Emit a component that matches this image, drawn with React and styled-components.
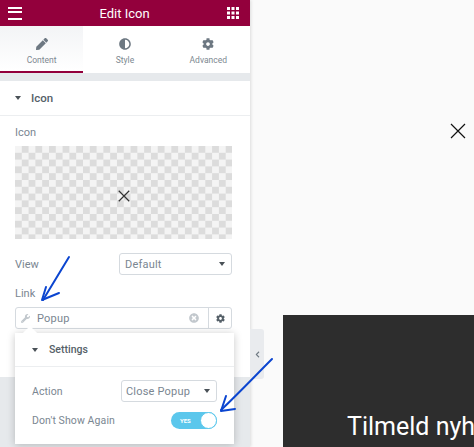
import styled, { createGlobalStyle } from 'styled-components';
import { FaPen, FaCog, FaAdjust, FaWrench, FaTimesCircle, FaChevronLeft } from 'react-icons/fa';

const GlobalStyle = createGlobalStyle`
  html, body {
    margin: 0;
    padding: 0;
    height: 100%;
    overflow: hidden;
    background: #fafafa;
    font-family: Roboto, "Liberation Sans", sans-serif;
  }
  #root { height: 100%; }
`;

const Page = styled.div`
  position: relative;
  display: flex;
  width: 474px;
  height: 447px;
  overflow: hidden;
`;

const Sidebar = styled.aside`
  position: relative;
  flex: 0 0 250px;
  display: flex;
  flex-direction: column;
  background: #e6e9ec;
  box-shadow: 1px 0 3px rgba(0, 0, 0, 0.12);
`;

const Header = styled.header`
  height: 26px;
  display: flex;
  align-items: center;
  justify-content: space-between;
  padding: 0 11px 0 8px;
  background: #93003c;
  color: #fff;
`;

const HeaderTitle = styled.h1`
  margin: 0;
  font-size: 13px;
  font-weight: 400;
`;

const Burger = styled.div`
  width: 14px;
  height: 9px;
  border-top: 2px solid #fff;
  border-bottom: 2px solid #fff;
  position: relative;
  &::after {
    content: '';
    position: absolute;
    left: 0;
    right: 0;
    top: 2.5px;
    height: 2px;
    background: #fff;
  }
`;

const Tabs = styled.nav`
  display: flex;
  height: 47px;
  background: #fff;
`;

const Tab = styled.div`
  flex: 1;
  display: flex;
  flex-direction: column;
  align-items: center;
  padding-top: 12px;
  gap: 5px;
  box-sizing: border-box;
  color: #7d8891;
  background: ${(p) => (p.$active ? 'linear-gradient(#f3f4f6, #fff)' : '#fff')};
  border-bottom: ${(p) => (p.$active ? '2px solid #93003c' : '0')};
  font-size: 8.5px;
  svg { font-size: 12px; color: #6d7882; }
`;

const Body = styled.div`
  margin-top: 8px;
  background: #fff;
  height: 296px;
`;

const SectionHead = styled.div`
  height: 34px;
  display: flex;
  align-items: center;
  gap: 10px;
  padding-left: 15px;
  border-bottom: 1px solid #eceef0;
  font-size: 11.5px;
  font-weight: 500;
  color: #556068;
`;

const Caret = styled.span`
  width: 0;
  height: 0;
  border-left: 3.5px solid transparent;
  border-right: 3.5px solid transparent;
  border-top: 4px solid #495157;
`;

const Controls = styled.div`
  padding: 10px 18px 0 15px;
  display: flex;
  flex-direction: column;
`;

const Label = styled.label`
  font-size: 11px;
  color: #7a8691;
  line-height: 13px;
`;

const Checker = styled.div`
  margin-top: 7px;
  height: 93px;
  display: flex;
  align-items: center;
  justify-content: center;
  background-color: #f4f4f4;
  background-image: conic-gradient(#dcdcdc 25%, transparent 0 50%, #dcdcdc 0 75%, transparent 0);
  background-size: 13.6px 13.6px;
`;

const PreviewGlyph = styled.span`
  height: 12px;
  color: #333;
`;

const Row = styled.div`
  display: flex;
  align-items: center;
  justify-content: space-between;
  margin-top: ${(p) => p.$top || '0'};
`;

const Select = styled.div`
  width: ${(p) => p.$width};
  height: 22px;
  box-sizing: border-box;
  display: flex;
  align-items: center;
  justify-content: space-between;
  padding: 0 6px 0 ${(p) => p.$pad || '5px'};
  border: 1px solid #d5dadf;
  border-radius: 3px;
  background: #fff;
  font-size: 11px;
  color: #7a8691;
  letter-spacing: 0.2px;
`;

const LinkLabel = styled(Label)`
  margin-top: 12px;
`;

const LinkField = styled.div`
  margin-top: 7px;
  height: 22px;
  box-sizing: border-box;
  display: flex;
  align-items: center;
  border: 1px solid #d5dadf;
  border-radius: 3px;
  font-size: 11px;
  color: #7a8691;
`;

const LinkText = styled.div`
  flex: 1;
  display: flex;
  align-items: center;
  gap: 7px;
  padding: 0 9px 0 5px;
  svg:first-child { color: #c2c8cd; font-size: 9px; }
  svg:last-child { color: #c2c8cd; font-size: 10px; margin-left: auto; }
  span { letter-spacing: 0.2px; }
`;

const LinkGear = styled.div`
  width: 22px;
  height: 100%;
  display: flex;
  align-items: center;
  justify-content: center;
  border-left: 1px solid #d5dadf;
  color: #556068;
  font-size: 9px;
`;

const Popover = styled.div`
  position: absolute;
  left: 15px;
  top: 333px;
  width: 219px;
  height: 111px;
  background: #fff;
  box-shadow: 0 1px 8px rgba(0, 0, 0, 0.22);
  &::before {
    content: '';
    position: absolute;
    left: 10px;
    top: -5px;
    width: 10px;
    height: 10px;
    background: #fff;
    transform: rotate(45deg);
  }
`;

const PopoverHead = styled.div`
  position: relative;
  height: 33px;
  display: flex;
  align-items: center;
  gap: 11px;
  padding-left: 17px;
  border-bottom: 1px solid #eceef0;
  font-size: 10.5px;
  font-weight: 500;
  color: #556068;
`;

const PopoverBody = styled.div`
  padding: 13px 17px 0 17px;
  display: flex;
  flex-direction: column;
`;

const PopLabel = styled.span`
  font-size: 10.5px;
  color: #7a8691;
  letter-spacing: 0.1px;
`;

const Toggle = styled.div`
  width: 46px;
  height: 17px;
  border-radius: 9px;
  background: #5bc7ec;
  position: relative;
  display: flex;
  align-items: center;
  padding-left: 9px;
  box-sizing: border-box;
  color: #fff;
  font-size: 6px;
  font-weight: 700;
  &::after {
    content: '';
    position: absolute;
    right: 0;
    top: 0;
    width: 17px;
    height: 17px;
    box-sizing: border-box;
    border: 1px solid #5bc7ec;
    border-radius: 50%;
    background: #fff;
  }
`;

const CollapseTab = styled.div`
  position: absolute;
  left: 250px;
  top: 329px;
  width: 14px;
  height: 50px;
  display: flex;
  align-items: center;
  justify-content: center;
  background: #e9ebee;
  border-radius: 0 3px 3px 0;
  color: #6d7882;
  font-size: 7px;
`;

const Preview = styled.main`
  flex: 1;
  min-width: 0;
  background: #fafafa;
  display: flex;
  flex-direction: column;
`;

const CloseButton = styled.div`
  align-self: flex-end;
  margin: 123px 8px 0 0;
  height: 16px;
  color: #111;
`;

const NewsletterCard = styled.section`
  margin: 176px 0 0 33px;
  height: 132px;
  flex: 1;
  background: #2d2d2d;
  box-sizing: border-box;
  padding: 97px 0 0 64px;
`;

const NewsletterTitle = styled.h2`
  margin: 0;
  font-size: 25px;
  line-height: 30px;
  font-weight: 400;
  color: #fff;
  white-space: nowrap;
  font-family: Roboto, "Liberation Sans", sans-serif;
`;

const Annotation = styled.svg`
  position: absolute;
  left: 0;
  top: 0;
  pointer-events: none;
`;

const Cross = ({ size, weight = 1.2 }) => (
  <svg width={size} height={size} viewBox="0 0 16 16" fill="none" stroke="currentColor" strokeWidth={weight}>
    <path d="M1 1 L15 15 M15 1 L1 15" />
  </svg>
);

const Dots = () => (
  <svg width="12" height="12" viewBox="0 0 12 12" fill="#fff">
    {[0, 4.5, 9].map((y) =>
      [0, 4.5, 9].map((x) => <rect key={`${x}-${y}`} x={x} y={y} width="3" height="3" />)
    )}
  </svg>
);

const App = () => (
  <>
    <GlobalStyle />
    <Page>
      <Sidebar>
        <Header>
          <Burger />
          <HeaderTitle>Edit Icon</HeaderTitle>
          <Dots />
        </Header>
        <Tabs>
          <Tab $active><FaPen />Content</Tab>
          <Tab><FaAdjust />Style</Tab>
          <Tab><FaCog />Advanced</Tab>
        </Tabs>
        <Body>
          <SectionHead><Caret />Icon</SectionHead>
          <Controls>
            <Label>Icon</Label>
            <Checker><PreviewGlyph><Cross size={12} weight={1.6} /></PreviewGlyph></Checker>
            <Row $top="14px">
              <Label>View</Label>
              <Select $width="113px">Default<Caret /></Select>
            </Row>
            <LinkLabel>Link</LinkLabel>
            <LinkField>
              <LinkText><FaWrench /><span>Popup</span><FaTimesCircle /></LinkText>
              <LinkGear><FaCog /></LinkGear>
            </LinkField>
          </Controls>
        </Body>
        <Popover>
          <PopoverHead><Caret />Settings</PopoverHead>
          <PopoverBody>
            <Row>
              <PopLabel>Action</PopLabel>
              <Select $width="96px" $pad="4px">Close Popup<Caret /></Select>
            </Row>
            <Row $top="10px">
              <PopLabel>Don't Show Again</PopLabel>
              <Toggle>YES</Toggle>
            </Row>
          </PopoverBody>
        </Popover>
      </Sidebar>
      <CollapseTab><FaChevronLeft /></CollapseTab>
      <Preview>
        <CloseButton><Cross size={16} /></CloseButton>
        <NewsletterCard>
          <NewsletterTitle>Tilmeld nyh</NewsletterTitle>
        </NewsletterCard>
      </Preview>
      <Annotation width="474" height="447" fill="none" stroke="#0b45d0" strokeWidth="2" strokeLinecap="round" strokeLinejoin="round">
        <path d="M69 257 C60 272 52 285 43 300" />
        <path d="M46 287 L42 300 L59 293" />
        <path d="M272 359 C255 376 238 394 221 410" />
        <path d="M226 396 L221 411 L235 409" />
      </Annotation>
    </Page>
  </>
);

export default App;
